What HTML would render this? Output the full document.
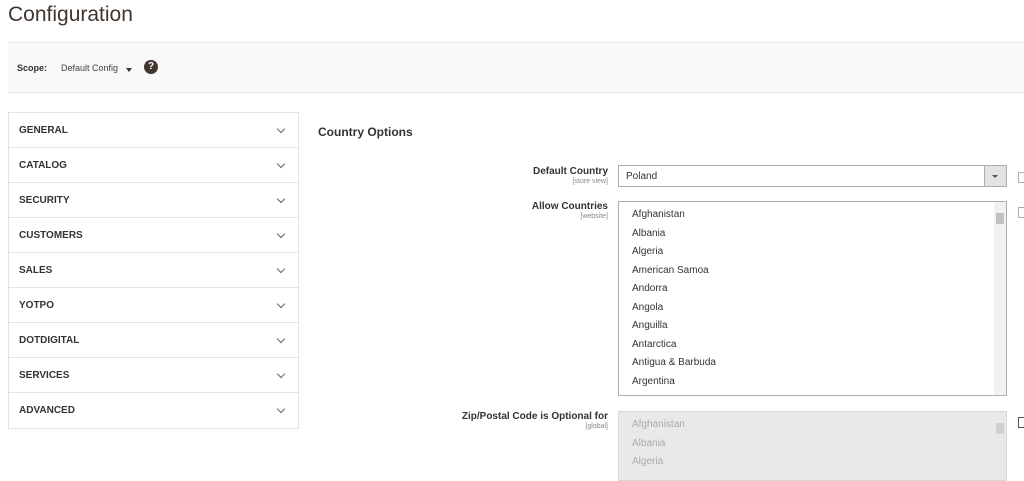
<!DOCTYPE html>
<html><head><style>
*{margin:0;padding:0;box-sizing:border-box}
body{width:1024px;height:469px;overflow:hidden;background:#fff;font-family:"Liberation Sans",sans-serif;color:#303030;position:relative}
.a{position:absolute}
h1{position:absolute;left:8px;top:3px;font-weight:400;font-size:21px;color:#41362f}
.bar{left:8px;top:42px;width:1016px;height:51px;background:#f8f8f8;border-top:1px solid #e8e8e8;border-bottom:1px solid #e3e3e3}
.side{left:8px;top:112px;width:291px;border:1px solid #e3e3e3}
.side div{height:35px;border-bottom:1px solid #e3e3e3;font-size:10px;font-weight:700;padding-left:10px;line-height:35px;color:#333;position:relative}
.side div:last-child{border-bottom:0}
.side div:after{content:"";position:absolute;right:14px;top:13px;width:5px;height:5px;border-right:1px solid #666;border-bottom:1px solid #666;transform:rotate(45deg)}
.lbl{right:416px;text-align:right;font-size:10px;font-weight:700;color:#333;line-height:12px}
.lbl small{display:block;font-size:7px;font-weight:400;color:#888;line-height:8px}
.box{left:618px;width:389px;border:1px solid #adadad;background:#fff}
.opt{font-size:10px;color:#333;padding-left:13px;height:18.5px;line-height:18.5px}
.cb{left:1018px;width:8px;height:11px;border:1px solid #adadad;border-right:0}
</style></head><body>
<h1>Configuration</h1>
<div class="a bar">
<span class="a" style="left:9px;top:20px;font-size:9px;font-weight:700">Scope:</span>
<span class="a" style="left:53px;top:20px;font-size:9px;color:#444">Default Config</span>
<span class="a" style="left:118px;top:25px;border-left:3px solid transparent;border-right:3px solid transparent;border-top:4px solid #333"></span>
<span class="a" style="left:136px;top:17px;width:14px;height:14px;border-radius:50%;background:#41362f;color:#fff;font-size:10px;font-weight:700;text-align:center;line-height:14px">?</span>
</div>
<div class="a side">
<div>GENERAL</div><div>CATALOG</div><div>SECURITY</div><div>CUSTOMERS</div><div>SALES</div><div>YOTPO</div><div>DOTDIGITAL</div><div>SERVICES</div><div>ADVANCED</div>
</div>
<div class="a" style="left:318px;top:125px;font-size:12px;font-weight:700;color:#333">Country Options</div>
<div class="a lbl" style="top:166px">Default Country<small>[store view]</small></div>
<div class="a box" style="top:165px;height:22px;font-size:10px;line-height:21px;padding-left:7px">Poland
<span class="a" style="right:0;top:0;width:22px;height:20px;background:#e3e3e3;border-left:1px solid #adadad"></span>
<span class="a" style="right:8px;top:9px;border-left:3px solid transparent;border-right:3px solid transparent;border-top:3px solid #555"></span></div>
<div class="a cb" style="top:172px"></div>
<div class="a lbl" style="top:201px">Allow Countries<small>[website]</small></div>
<div class="a box" style="top:201px;height:195px;padding-top:4px">
<div class="opt">Afghanistan</div><div class="opt">Albania</div><div class="opt">Algeria</div><div class="opt">American Samoa</div><div class="opt">Andorra</div><div class="opt">Angola</div><div class="opt">Anguilla</div><div class="opt">Antarctica</div><div class="opt">Antigua &amp; Barbuda</div><div class="opt">Argentina</div>
<span class="a" style="right:0;top:0;width:12px;height:193px;background:#f1f1f1"></span>
<span class="a" style="right:2px;top:11px;width:8px;height:11px;background:#c1c1c1"></span>
</div>
<div class="a cb" style="top:207px"></div>
<div class="a lbl" style="top:411px">Zip/Postal Code is Optional for<small>[global]</small></div>
<div class="a box" style="top:411px;height:70px;padding-top:4px;background:#e9e9e9;border-color:#d6d6d6">
<div class="opt" style="color:#aaa">Afghanistan</div><div class="opt" style="color:#aaa">Albania</div><div class="opt" style="color:#aaa">Algeria</div>
<span class="a" style="right:2px;top:11px;width:8px;height:11px;background:#d0d0d0"></span>
</div>
<div class="a cb" style="top:417px;border-color:#555"></div>
</body></html>
